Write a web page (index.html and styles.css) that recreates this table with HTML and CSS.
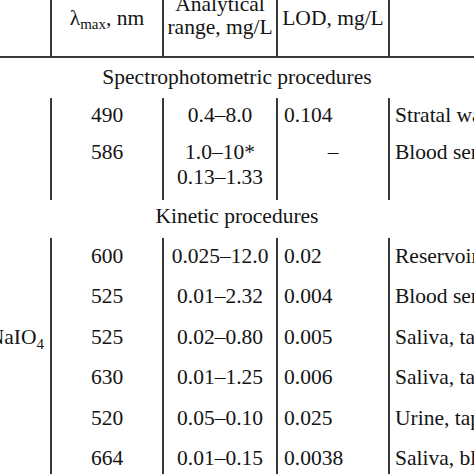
FILE: index.html
```html
<!DOCTYPE html>
<html>
<head>
<meta charset="utf-8">
<link rel="stylesheet" href="styles.css">
</head>
<body>
<div class="page">
  <div class="row head">
    <div class="cell c1"></div>
    <div class="cell c2 center"><span>λ<sub class="sm">max</sub>, nm</span></div>
    <div class="cell c3 center"><span>Analytical<br>range, mg/L</span></div>
    <div class="cell c4 center"><span>LOD, mg/L</span></div>
    <div class="cell c5"></div>
  </div>
  <div class="caption cap1">Spectrophotometric procedures</div>
  <div class="group">
    <div class="row r1a">
      <div class="cell c1"></div>
      <div class="cell c2 center">490</div>
      <div class="cell c3 center">0.4–8.0</div>
      <div class="cell c4">0.104</div>
      <div class="cell c5"><span>Stratal water</span></div>
    </div>
    <div class="row r1b">
      <div class="cell c1"></div>
      <div class="cell c2 center">586</div>
      <div class="cell c3 center"><span>1.0–10*<br>0.13–1.33</span></div>
      <div class="cell c4 center">–</div>
      <div class="cell c5"><span>Blood serum</span></div>
    </div>
  </div>
  <div class="caption cap2">Kinetic procedures</div>
  <div class="group">
    <div class="row r2">
      <div class="cell c1"></div>
      <div class="cell c2 center">600</div>
      <div class="cell c3 center">0.025–12.0</div>
      <div class="cell c4">0.02</div>
      <div class="cell c5"><span>Reservoir water</span></div>
    </div>
    <div class="row r2">
      <div class="cell c1"></div>
      <div class="cell c2 center">525</div>
      <div class="cell c3 center">0.01–2.32</div>
      <div class="cell c4">0.004</div>
      <div class="cell c5"><span>Blood serum</span></div>
    </div>
    <div class="row r2">
      <div class="cell c1 right"><span>NaIO<sub class="num">4</sub></span></div>
      <div class="cell c2 center">525</div>
      <div class="cell c3 center">0.02–0.80</div>
      <div class="cell c4">0.005</div>
      <div class="cell c5"><span>Saliva, tap water</span></div>
    </div>
    <div class="row r2">
      <div class="cell c1"></div>
      <div class="cell c2 center">630</div>
      <div class="cell c3 center">0.01–1.25</div>
      <div class="cell c4">0.006</div>
      <div class="cell c5"><span>Saliva, tap water</span></div>
    </div>
    <div class="row r2">
      <div class="cell c1"></div>
      <div class="cell c2 center">520</div>
      <div class="cell c3 center">0.05–0.10</div>
      <div class="cell c4">0.025</div>
      <div class="cell c5"><span>Urine, tap water</span></div>
    </div>
    <div class="row r2">
      <div class="cell c1"></div>
      <div class="cell c2 center">664</div>
      <div class="cell c3 center">0.01–0.15</div>
      <div class="cell c4">0.0038</div>
      <div class="cell c5"><span>Saliva, blood serum</span></div>
    </div>
  </div>
</div>
</body>
</html>
```
FILE: styles.css
```css
html, body {
  margin: 0;
  padding: 0;
  background: #fff;
}
body {
  width: 474px;
  height: 474px;
  overflow: hidden;
  font-family: "Liberation Serif", "Times New Roman", serif;
  font-size: 21.5px;
  color: #141414;
}
.page {
  display: flex;
  flex-direction: column;
  width: 474px;
}
.row {
  display: grid;
  grid-template-columns: 50px 112px 114px 112px 240px;
}
.cell {
  display: flex;
  align-items: flex-start;
  white-space: nowrap;
  line-height: 25px;
  min-width: 0;
}
.c2, .c3, .c4, .c5 {
  border-left: 2px solid #3a3a3a;
}
.center {
  justify-content: center;
  text-align: center;
}
.right {
  justify-content: flex-end;
  padding-right: 6px;
}
.c4 { padding-left: 6px; }
.c4.center { padding-left: 0; }
.c5 { padding-left: 5px; }
sub {
  line-height: 0;
}
sub.sm {
  font-size: 15px;
  vertical-align: -4px;
}
sub.num {
  font-size: 15px;
  vertical-align: -5px;
}
.head {
  height: 56px;
  grid-template-rows: 56px;
  border-bottom: 2px solid #3a3a3a;
}
.head .cell {
  align-items: center;
  padding-bottom: 20px;
  line-height: 23px;
}
.head .c3 {
  padding-bottom: 24px;
}
.caption {
  text-align: center;
  line-height: 25px;
  white-space: nowrap;
}
.cap1 { padding: 7px 0 8px; }
.cap2 { padding: 4px 0 9px; }
.group {
  display: flex;
  flex-direction: column;
}
.r1a .cell {
  padding-top: 5px;
  padding-bottom: 6px;
}
.r1b .cell {
  padding-top: 6px;
  padding-bottom: 10px;
}
.r2 .cell {
  padding-top: 5.5px;
  padding-bottom: 10px;
}
```
